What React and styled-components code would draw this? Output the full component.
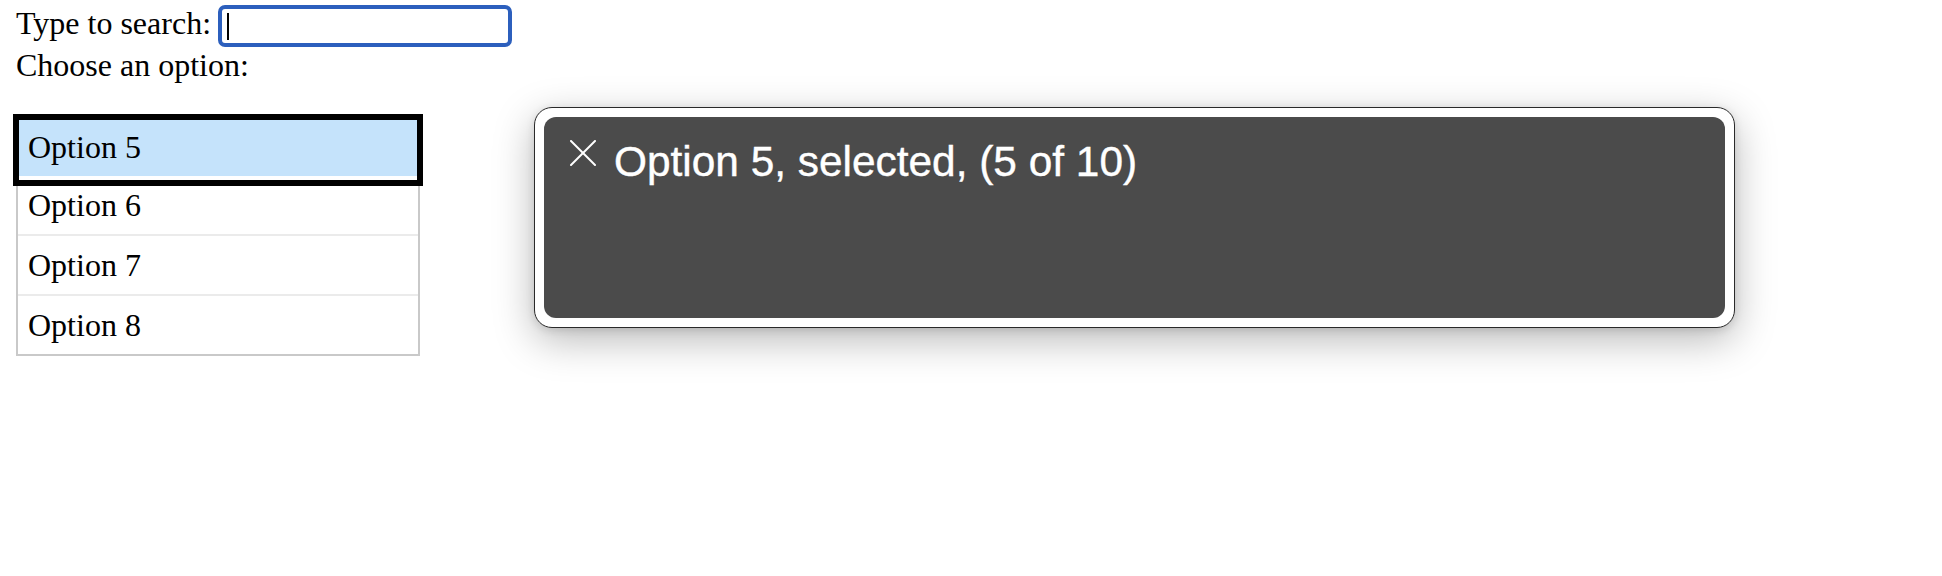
import React from "react";
import styled, { createGlobalStyle } from "styled-components";

const GlobalStyle = createGlobalStyle`
  html, body { margin: 0; padding: 0; background: #ffffff; }
  body { font-family: "Liberation Serif", "Times New Roman", serif; color: #000; }
`;

const Page = styled.div`
  position: relative;
  width: 1942px;
  height: 576px;
  padding: 5px 16px 0;
  box-sizing: border-box;
  font-size: 32px;
`;

const SearchLine = styled.div`
  display: flex;
  align-items: flex-start;
  gap: 7px;
`;

const Label = styled.label`
  line-height: normal;
  white-space: nowrap;
`;

const InputWrap = styled.div`
  position: relative;
  width: 294px;
  height: 42px;
`;

const SearchInput = styled.input`
  width: 100%;
  height: 100%;
  box-sizing: border-box;
  border: 4px solid #2c5fbd;
  border-radius: 7px;
  padding: 0 5px;
  font: 26px "Liberation Sans", Arial, sans-serif;
  background: #fff;
  caret-color: transparent;
  outline: none;
`;

const Caret = styled.span`
  position: absolute;
  left: 9px;
  top: 8px;
  width: 2px;
  height: 27px;
  background: #000;
  pointer-events: none;
`;

const Prompt = styled.div`
  line-height: normal;
`;

const ListBox = styled.ul`
  list-style: none;
  margin: 30px 0 0;
  padding: 0;
  width: 404px;
  box-sizing: border-box;
  border: 2px solid #c9c9c9;
`;

const OptionRow = styled.li`
  position: relative;
  box-sizing: border-box;
  height: ${(p) => (p.$last ? 58 : 60)}px;
  padding: ${(p) => (p.$selected ? 13 : 11)}px 10px 0;
  line-height: normal;
  background: ${(p) => (p.$selected ? "#c5e3fb" : "#ffffff")};
  border-bottom: ${(p) => (p.$last || p.$selected ? "none" : "2px solid #ebebeb")};

  ${(p) =>
    p.$selected &&
    `
    &::after {
      content: "";
      position: absolute;
      z-index: 2;
      top: -2px;
      left: -5px;
      right: -5px;
      height: 72px;
      box-sizing: border-box;
      border: 6px solid #000;
      pointer-events: none;
    }
  `}
`;

const Caption = styled.div`
  position: absolute;
  left: 534px;
  top: 107px;
  width: 1201px;
  height: 221px;
  box-sizing: border-box;
  padding: 9px;
  background: #ffffff;
  border: 1px solid #2a2a2a;
  border-radius: 18px;
  box-shadow: 0 12px 40px rgba(0, 0, 0, 0.28), 0 2px 8px rgba(0, 0, 0, 0.12);
`;

const CaptionPanel = styled.div`
  display: flex;
  align-items: flex-start;
  gap: 18px;
  height: 100%;
  box-sizing: border-box;
  padding: 21px 26px;
  background: #4b4b4b;
  border-radius: 12px;
  color: #ffffff;
`;

const CloseIcon = styled.svg`
  flex: none;
  width: 26px;
  height: 26px;
  margin-top: 2px;
`;

const CaptionText = styled.div`
  font-family: "Liberation Sans", Arial, sans-serif;
  font-size: 42.4px;
  line-height: normal;
  white-space: nowrap;
  -webkit-text-stroke: 0.4px #ffffff;
`;

const options = ["Option 5", "Option 6", "Option 7", "Option 8"];

export default function App() {
  return (
    <>
      <GlobalStyle />
      <Page>
        <SearchLine>
          <Label htmlFor="search">Type to search:</Label>
          <InputWrap>
            <SearchInput id="search" type="text" defaultValue="" />
            <Caret />
          </InputWrap>
        </SearchLine>
        <Prompt>Choose an option:</Prompt>
        <ListBox role="listbox">
          {options.map((o, i) => (
            <OptionRow
              key={o}
              role="option"
              aria-selected={i === 0}
              $selected={i === 0}
              $last={i === options.length - 1}
            >
              {o}
            </OptionRow>
          ))}
        </ListBox>
        <Caption>
          <CaptionPanel>
            <CloseIcon viewBox="0 0 26 26" aria-hidden="true">
              <line x1="1" y1="1" x2="25" y2="25" stroke="#fff" strokeWidth="2" strokeLinecap="round" />
              <line x1="25" y1="1" x2="1" y2="25" stroke="#fff" strokeWidth="2" strokeLinecap="round" />
            </CloseIcon>
            <CaptionText>Option 5, selected, (5 of 10)</CaptionText>
          </CaptionPanel>
        </Caption>
      </Page>
    </>
  );
}
